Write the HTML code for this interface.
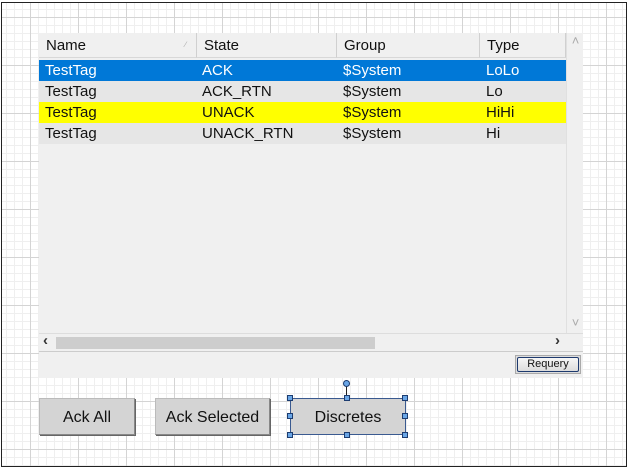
<!DOCTYPE html>
<html><head><style>
body{margin:0;width:628px;height:469px;overflow:hidden;background:#fff;font-family:"Liberation Sans",Arial,sans-serif;}
.frame{position:absolute;left:1px;top:2px;width:624px;height:463px;border:1px solid #222;
background-color:#fff;
background-image:
linear-gradient(to right,#d4d4d4 1px,transparent 1px),
linear-gradient(to bottom,#d4d4d4 1px,transparent 1px),
linear-gradient(to right,#efefef 1px,transparent 1px),
linear-gradient(to bottom,#efefef 1px,transparent 1px);
background-size:48px 48px,48px 48px,8px 8px,8px 8px;
background-position:28px 0,0 14px,4px 0,0 6px;}
.grid{position:absolute;left:39px;top:33px;width:544px;height:345px;background:#f0f0f0;}
.hdr{position:absolute;top:0;height:25px;background:#f0f0f0;border-right:1px solid #d0d0d0;border-bottom:1px solid #d8d8d8;font-size:15px;line-height:26px;padding-left:7px;box-sizing:border-box;color:#111}
.row{position:absolute;left:0;width:527px;height:21px;font-size:15px;line-height:22px;color:#111}
.row span{position:absolute;top:0}
.c1{left:6px}.c2{left:163px}.c3{left:304px}.c4{left:447px}
.btn{position:absolute;top:398px;height:37px;background:#d4d4d4;border:1px solid #888;border-top-color:#bbb;border-left-color:#bbb;box-shadow:1px 1px 0 #666;font-size:16px;line-height:37px;text-align:center;color:#111;box-sizing:border-box}
.h{position:absolute;width:6px;height:6px;background:#6aa6e6;border:1px solid #1c3c70;box-sizing:border-box}
</style></head><body>
<div class="frame"></div>
<div class="grid">
 <div class="hdr" style="left:0;width:158px">Name<span style="position:absolute;left:146px;font-size:8px;color:#aaa;top:-1px">∕</span></div>
 <div class="hdr" style="left:158px;width:140px">State</div>
 <div class="hdr" style="left:298px;width:143px">Group</div>
 <div class="hdr" style="left:441px;width:86px">Type</div>
 <div class="row" style="top:27px;background:#0078d7;color:#fff"><span class="c1">TestTag</span><span class="c2">ACK</span><span class="c3">$System</span><span class="c4">LoLo</span></div>
 <div class="row" style="top:48px;background:#e6e6e6"><span class="c1">TestTag</span><span class="c2">ACK_RTN</span><span class="c3">$System</span><span class="c4">Lo</span></div>
 <div class="row" style="top:69px;background:#ffff00"><span class="c1">TestTag</span><span class="c2">UNACK</span><span class="c3">$System</span><span class="c4">HiHi</span></div>
 <div class="row" style="top:90px;background:#e6e6e6"><span class="c1">TestTag</span><span class="c2">UNACK_RTN</span><span class="c3">$System</span><span class="c4">Hi</span></div>
 <div style="position:absolute;left:527px;top:0;width:17px;height:300px;border-left:1px solid #e0e0e0;font-size:13px;color:#aaa;text-align:center">
  <div style="margin-top:0px">˄</div><div style="position:absolute;top:282px;width:17px">˅</div></div>
 <div style="position:absolute;left:0;top:300px;width:544px;height:17px;border-top:1px solid #ddd;border-bottom:1px solid #ccc;">
  <div style="position:absolute;left:17px;top:3px;width:319px;height:12px;background:#cdcdcd"></div>
  <div style="position:absolute;left:4px;top:-2px;font-size:15px;font-weight:bold;color:#333">‹</div>
  <div style="position:absolute;left:516px;top:-2px;font-size:15px;font-weight:bold;color:#333">›</div>
 </div>
 <div style="position:absolute;left:476px;top:322px;width:66px;height:19px;border:1px solid #aaa;box-sizing:border-box;background:#ddd">
  <div style="position:absolute;left:1px;top:1px;right:1px;bottom:1px;border:1px solid #1e3a6e;border-radius:2px;background:linear-gradient(#f6f6f6,#dcdcdc);font-size:11px;line-height:13px;text-align:center;color:#111">Requery</div>
 </div>
</div>
<div class="btn" style="left:39px;width:96px">Ack All</div>
<div class="btn" style="left:155px;width:115px">Ack Selected</div>
<div class="btn" style="left:290px;width:116px;border:1px solid #3a5a90;box-shadow:none">Discretes</div>
<div style="position:absolute;left:346px;top:385px;width:1px;height:11px;background:#222"></div>
<div style="position:absolute;left:343px;top:380px;width:7px;height:7px;border-radius:50%;background:#6aa6e6;border:1px solid #1c3c70;box-sizing:border-box"></div>
<div class="h" style="left:287px;top:395px"></div><div class="h" style="left:344px;top:395px"></div><div class="h" style="left:402px;top:395px"></div>
<div class="h" style="left:287px;top:413px"></div><div class="h" style="left:402px;top:413px"></div>
<div class="h" style="left:287px;top:432px"></div><div class="h" style="left:344px;top:432px"></div><div class="h" style="left:402px;top:432px"></div>
</body></html>
